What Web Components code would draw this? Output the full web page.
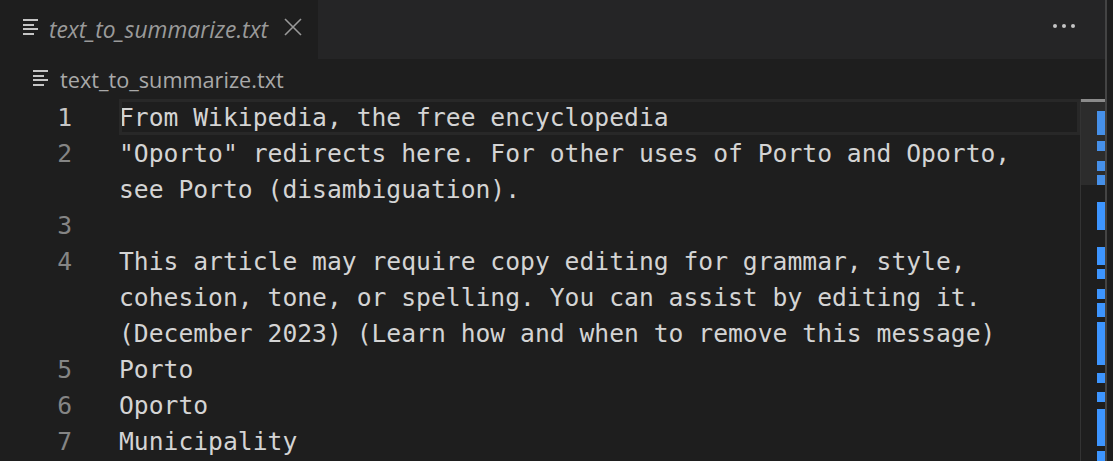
<!DOCTYPE html>
<html lang="en">
  <head>
    <meta charset="utf-8" />
    <title>text_to_summarize.txt</title>
    <style>
      html,
      body {
        margin: 0;
        height: 100%;
        background: #1e1e1e;
        overflow: hidden;
      }
    </style>
    <template id="file-icon-template">
      <style>
        :host {
          display: inline-flex;
          width: 16px;
          height: 16px;
        }
        svg {
          display: block;
        }
      </style>
      <svg width="16" height="16" viewBox="0 0 16 16" fill="#c5c5c5">
        <rect x="0" y="0" width="15" height="2" />
        <rect x="0" y="5" width="11" height="2" />
        <rect x="0" y="9" width="15" height="2" />
        <rect x="0" y="14" width="11" height="2" />
      </svg>
    </template>
    <template id="editor-tab-template">
      <style>
        :host {
          display: flex;
          align-items: center;
          box-sizing: border-box;
          width: 318px;
          height: 59px;
          padding: 0 0 0 23px;
          background: #1e1e1e;
          font: italic 22.8px "Open Sans", sans-serif;
          color: #9a9a9a;
        }
        file-icon {
          margin-top: -5px;
        }
        .name {
          margin-left: 10px;
        }
        svg {
          margin: -5px 0 0 16px;
        }
      </style>
      <file-icon></file-icon>
      <span class="name"><slot></slot></span>
      <svg width="18" height="18" viewBox="0 0 18 18" stroke="#999" stroke-width="1.6" fill="none">
        <path d="M1 1l16 16M17 1L1 17" />
      </svg>
    </template>
    <template id="tab-bar-template">
      <style>
        :host {
          display: flex;
          justify-content: space-between;
          height: 59px;
          background: #252526;
        }
        .actions {
          display: flex;
          align-items: center;
          gap: 5px;
          padding: 0 30px 7px 0;
        }
        .actions i {
          width: 4px;
          height: 4px;
          border-radius: 50%;
          background: #c5c5c5;
        }
      </style>
      <slot></slot>
      <div class="actions"><i></i><i></i><i></i></div>
    </template>
    <template id="bread-crumb-template">
      <style>
        :host {
          display: flex;
          align-items: center;
          height: 40px;
          padding-left: 33px;
          font: 21.7px "Open Sans", sans-serif;
          color: #a9a9a9;
        }
        file-icon {
          margin-top: -2px;
        }
        span {
          margin-left: 11px;
        }
      </style>
      <file-icon></file-icon>
      <span><slot></slot></span>
    </template>
    <template id="code-line-template">
      <style>
        :host {
          display: grid;
          grid-template-columns: 119px 1fr;
          line-height: 36px;
          height: calc(36px * var(--rows, 1));
          white-space: pre;
        }
        .num {
          text-align: right;
          padding-right: 47px;
          color: #858585;
        }
        :host([current]) .num {
          color: #c6c6c6;
        }
      </style>
      <div class="num"></div>
      <div class="text"><slot></slot></div>
    </template>
    <template id="code-view-template">
      <style>
        :host {
          display: block;
          position: relative;
          box-sizing: border-box;
          height: 362px;
          padding-top: 1px;
          overflow: hidden;
          font: 24.68px "DejaVu Sans Mono", monospace;
          color: #d4d4d4;
        }
        .highlight {
          position: absolute;
          left: 119px;
          right: 25px;
          top: 0;
          height: 30px;
          border: 3px solid #282828;
        }
      </style>
      <div class="highlight"></div>
      <slot></slot>
      <overview-ruler></overview-ruler>
    </template>
    <template id="overview-ruler-template">
      <style>
        :host {
          display: block;
          position: absolute;
          top: 0;
          right: 0;
          bottom: 0;
          width: 24px;
          border-left: 1px solid #333;
        }
        .slider {
          position: absolute;
          inset: 0 0 auto 0;
          height: 86px;
          box-sizing: border-box;
          border-top: 3px solid #8b8b8b;
          background: rgba(121, 121, 121, 0.16);
        }
        .mark {
          position: absolute;
          right: 0;
          width: 8px;
          background: #3d95ff;
        }
      </style>
    </template>
    <template id="editor-shell-template">
      <style>
        :host {
          display: block;
          width: 1113px;
          height: 461px;
        }
        .main {
          height: 100%;
          width: 1105px;
          border-right: 2px solid #444;
        }
      </style>
      <div class="main"><slot></slot></div>
    </template>
    <script>
      function defineFromTemplate(name, templateId, setup) {
        const template = document.querySelector(templateId);
        customElements.define(
          name,
          class extends HTMLElement {
            connectedCallback() {
              if (this.shadowRoot) return;
              this.attachShadow({mode: 'open'}).appendChild(
                template.content.cloneNode(true)
              );
              if (setup) setup(this);
            }
          }
        );
      }

      defineFromTemplate('file-icon', '#file-icon-template');
      defineFromTemplate('editor-tab', '#editor-tab-template');
      defineFromTemplate('tab-bar', '#tab-bar-template');
      defineFromTemplate('bread-crumb', '#bread-crumb-template');
      defineFromTemplate('editor-shell', '#editor-shell-template');
      defineFromTemplate('code-view', '#code-view-template');
      defineFromTemplate('code-line', '#code-line-template', (el) => {
        el.shadowRoot.querySelector('.num').textContent =
          el.getAttribute('num') || '';
      });

      // y, height of each change mark, relative to the top of the editor
      const MARKS = [
        [12, 24], [42, 10], [62, 10], [76, 10], [103, 28], [148, 18],
        [170, 10], [190, 10], [204, 14], [223, 43], [274, 10], [293, 10],
        [310, 37], [352, 10],
      ];
      defineFromTemplate('overview-ruler', '#overview-ruler-template', (el) => {
        for (const [top, height] of MARKS) {
          const mark = document.createElement('div');
          mark.className = 'mark';
          mark.style.top = `${top}px`;
          mark.style.height = `${height}px`;
          el.shadowRoot.appendChild(mark);
        }
        // the slider sits above the marks and tints them
        const slider = document.createElement('div');
        slider.className = 'slider';
        el.shadowRoot.appendChild(slider);
      });
    </script>
  </head>

  <body>
    <editor-shell>
      <tab-bar><editor-tab>text_to_summarize.txt</editor-tab></tab-bar>
      <bread-crumb>text_to_summarize.txt</bread-crumb>
      <code-view>
        <code-line num="1" current>From Wikipedia, the free encyclopedia</code-line>
        <code-line num="2" style="--rows: 2">"Oporto" redirects here. For other uses of Porto and Oporto,
see Porto (disambiguation).</code-line>
        <code-line num="3"></code-line>
        <code-line num="4" style="--rows: 3">This article may require copy editing for grammar, style,
cohesion, tone, or spelling. You can assist by editing it.
(December 2023) (Learn how and when to remove this message)</code-line>
        <code-line num="5">Porto</code-line>
        <code-line num="6">Oporto</code-line>
        <code-line num="7">Municipality</code-line>
      </code-view>
    </editor-shell>
  </body>
</html>
